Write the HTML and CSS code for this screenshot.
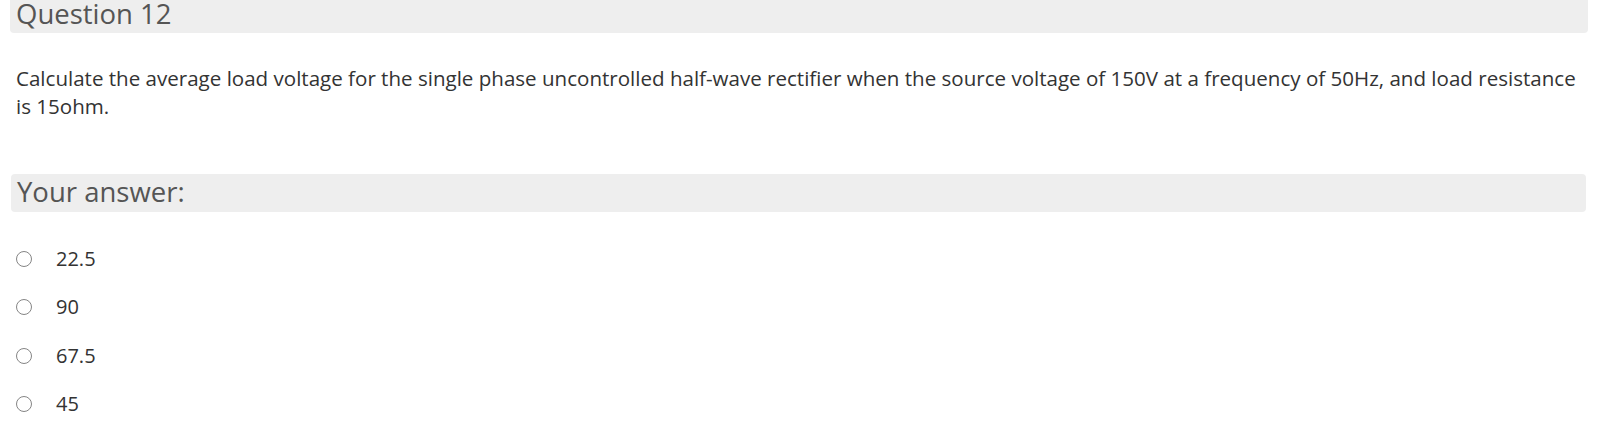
FILE: index.html
```html
<!DOCTYPE html>
<html>
<head>
<meta charset="utf-8">
<link rel="stylesheet" href="styles.css">
</head>
<body>
<div class="quiz">
  <div class="bar title">Question 12</div>
  <p class="question">Calculate the average load voltage for the single phase uncontrolled half-wave rectifier when the source voltage of 150V at a frequency of 50Hz, and load resistance is 15ohm.</p>
  <div class="bar answer-head">Your answer:</div>
  <div class="options">
    <label class="option"><span class="radio"></span><span class="text">22.5</span></label>
    <label class="option"><span class="radio"></span><span class="text">90</span></label>
    <label class="option"><span class="radio"></span><span class="text">67.5</span></label>
    <label class="option"><span class="radio"></span><span class="text">45</span></label>
  </div>
</div>
</body>
</html>
```

FILE: styles.css
```css
html, body {
  margin: 0;
  padding: 0;
  background: #fff;
}
body {
  font-family: "Open Sans", "Liberation Sans", sans-serif;
  color: #333;
}
.quiz {
  margin-left: 10px;
  width: 1578px;
}
.bar {
  background: #eeeeee;
  border-radius: 0 0 4px 4px;
  padding: 0 6px;
  font-size: 27.5px;
  color: #555;
}
.title {
  line-height: 28px;
  padding-bottom: 5px;
}
.question {
  margin: 31px 0 0 0;
  padding: 0 0 0 6px;
  font-size: 20.55px;
  line-height: 28px;
  color: #333;
}
.answer-head {
  margin-top: 54px;
  margin-left: 1px;
  width: 1563px;
  border-radius: 4px;
  line-height: 36px;
  padding-bottom: 2px;
}
.options {
  margin-top: 23px;
  display: flex;
  flex-direction: column;
}
.option {
  display: flex;
  align-items: center;
  height: 48.3px;
  font-size: 20px;
  line-height: 24px;
  color: #333;
}
.radio {
  box-sizing: border-box;
  width: 16px;
  height: 16px;
  border: 1.5px solid #858585;
  border-radius: 50%;
  margin-left: 6px;
  flex: none;
}
.text {
  margin-left: 24px;
}
```
